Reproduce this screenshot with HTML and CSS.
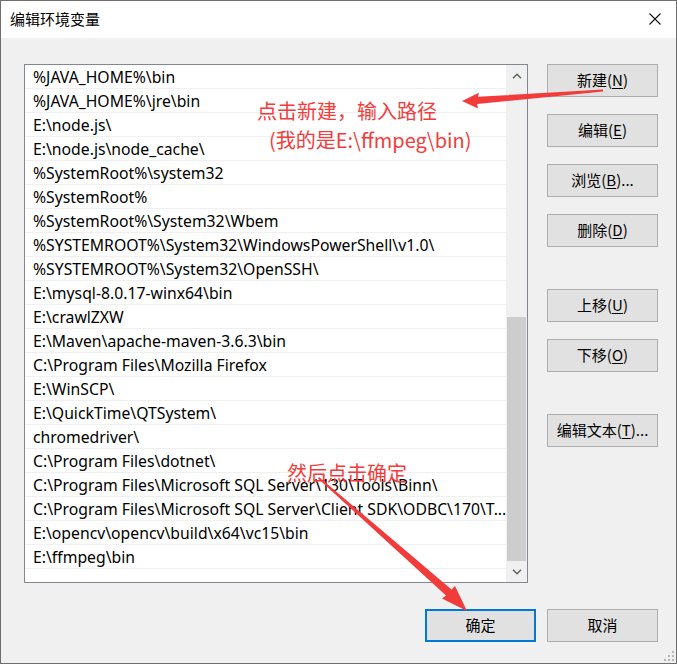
FILE: index.html
```html
<!DOCTYPE html>
<html lang="zh-CN">
<head>
    <meta charset="UTF-8">
    <meta name="viewport" content="width=device-width, initial-scale=1.0">
    <title>编辑环境变量</title>
    <link rel="stylesheet" href="styles.css">
</head>
<body>
    <div class="window">
        <div class="titlebar">
            <span class="title">编辑环境变量</span>
            <svg class="close" width="12" height="12" viewBox="0 0 12 12">
                <path d="M0.5 0.5 L11.5 11.5 M11.5 0.5 L0.5 11.5" stroke="#111" stroke-width="1.1" fill="none"/>
            </svg>
        </div>
        <div class="content">
            <div class="main">
                <div class="listbox">
                    <ul class="items">
                        <li>%JAVA_HOME%\bin</li>
                        <li>%JAVA_HOME%\jre\bin</li>
                        <li>E:\node.js\</li>
                        <li>E:\node.js\node_cache\</li>
                        <li>%SystemRoot%\system32</li>
                        <li>%SystemRoot%</li>
                        <li>%SystemRoot%\System32\Wbem</li>
                        <li>%SYSTEMROOT%\System32\WindowsPowerShell\v1.0\</li>
                        <li>%SYSTEMROOT%\System32\OpenSSH\</li>
                        <li>E:\mysql-8.0.17-winx64\bin</li>
                        <li>E:\crawlZXW</li>
                        <li>E:\Maven\apache-maven-3.6.3\bin</li>
                        <li>C:\Program Files\Mozilla Firefox</li>
                        <li>E:\WinSCP\</li>
                        <li>E:\QuickTime\QTSystem\</li>
                        <li>chromedriver\</li>
                        <li>C:\Program Files\dotnet\</li>
                        <li>C:\Program Files\Microsoft SQL Server\130\Tools\Binn\</li>
                        <li>C:\Program Files\Microsoft SQL Server\Client SDK\ODBC\170\T...</li>
                        <li>E:\opencv\opencv\build\x64\vc15\bin</li>
                        <li>E:\ffmpeg\bin</li>
                        <li></li>
                    </ul>
                    <div class="scrollbar">
                        <div class="sb-btn">
                            <svg width="10" height="6" viewBox="0 0 10 6"><path d="M1 5.2 L5 1.2 L9 5.2" stroke="#606060" stroke-width="1.5" fill="none"/></svg>
                        </div>
                        <div class="sb-track"><div class="sb-thumb"></div></div>
                        <div class="sb-btn">
                            <svg width="10" height="6" viewBox="0 0 10 6"><path d="M1 0.8 L5 4.8 L9 0.8" stroke="#606060" stroke-width="1.5" fill="none"/></svg>
                        </div>
                    </div>
                </div>
                <div class="side">
                    <div class="group">
                        <button class="btn">新建(<u>N</u>)</button>
                        <button class="btn">编辑(<u>E</u>)</button>
                        <button class="btn">浏览(<u>B</u>)...</button>
                        <button class="btn">删除(<u>D</u>)</button>
                    </div>
                    <div class="group">
                        <button class="btn">上移(<u>U</u>)</button>
                        <button class="btn">下移(<u>O</u>)</button>
                    </div>
                    <div class="group">
                        <button class="btn">编辑文本(<u>T</u>)...</button>
                    </div>
                </div>
            </div>
            <div class="footer">
                <button class="btn default">确定</button>
                <button class="btn">取消</button>
            </div>
        </div>
        <div class="grip">
            <i></i><i></i><i></i><i></i><i></i><i></i>
        </div>

        <!-- red notes drawn on top of the screenshot -->
        <svg class="arrows" width="677" height="664" viewBox="0 0 677 664">
            <polygon fill="#f23c3c" points="603,89.5 478,96.8 479,92.8 462,101 478,108.5 477,104 603,91.5"/>
            <polygon fill="#f23c3c" points="319,477 451.5,589.5 455,586 467,611 442,598.5 446,595.5 318,478.5"/>
        </svg>
        <div class="note note-new">点击新建，输入路径</div>
        <div class="note note-path">(我的是E:\ffmpeg\bin)</div>
        <div class="note note-ok">然后点击确定</div>
    </div>
</body>
</html>
```

FILE: styles.css
```css
*{
    box-sizing: border-box;
}
html, body{
    margin: 0;
    padding: 0;
    background: #ffffff;
}
body{
    font-family: "Noto Sans", "Noto Sans CJK SC", sans-serif;
    font-size: 15px;
    color: #000;
}
.window{
    position: relative;
    width: 677px;
    height: 664px;
    border: 1px solid #6e6e6e;
    background-color: #f0f0f0;
    display: flex;
    flex-direction: column;
}
.titlebar{
    height: 37px;
    background: #fff;
    display: flex;
    align-items: center;
    justify-content: space-between;
    padding: 0 15px 2px 9px;
}
.title{
    font-family: "Noto Sans CJK SC", sans-serif;
    font-size: 15px;
    color: #000;
}
.content{
    padding: 26px 18px 0 23px;
}
.main{
    display: flex;
    align-items: flex-start;
}
.listbox{
    width: 504px;
    height: 519px;
    border: 1px solid #828790;
    background: #fff;
    display: flex;
}
.items{
    list-style: none;
    margin: 0;
    padding: 0;
    flex: 1;
    height: 100%;
    overflow: hidden;
}
.items li{
    height: 24px;
    line-height: 24px;
    border-bottom: 1px solid #f0f0f0;
    padding-left: 8px;
    font-size: 15.75px;
    white-space: nowrap;
    overflow: hidden;
}
.scrollbar{
    width: 21px;
    background: #f0f0f0;
    display: flex;
    flex-direction: column;
}
.sb-btn{
    height: 21px;
    display: flex;
    align-items: center;
    justify-content: center;
}
.sb-track{
    flex: 1;
    padding-top: 231px;
}
.sb-thumb{
    height: 244px;
    margin: 0 1px;
    background: #cdcdcd;
}
.side{
    margin-left: 19px;
    display: flex;
    flex-direction: column;
    gap: 42px;
}
.group{
    display: flex;
    flex-direction: column;
    gap: 17px;
}
.btn{
    width: 111px;
    height: 33px;
    padding: 0 0 3px;
    background: #e1e1e1;
    border: 1px solid #adadad;
    font-family: "Noto Sans CJK SC", sans-serif;
    font-size: 15px;
    color: #000;
}
.btn u{
    text-decoration-thickness: 1px;
    text-underline-offset: 2px;
}
.btn.default{
    border: 2px solid #0078d7;
}
.footer{
    margin-top: 26px;
    display: flex;
    justify-content: flex-end;
    gap: 11px;
}
.grip{
    position: absolute;
    right: 2px;
    bottom: 2px;
    width: 10px;
    height: 10px;
    display: grid;
    grid-template-columns: repeat(3, 2px);
    grid-template-rows: repeat(3, 2px);
    gap: 2px;
    direction: rtl;
}
.grip i{
    background: #b8b8b8;
}
.grip i:nth-child(1){ grid-area: 1 / 1; }
.grip i:nth-child(2){ grid-area: 2 / 1; }
.grip i:nth-child(3){ grid-area: 2 / 2; }
.grip i:nth-child(4){ grid-area: 3 / 1; }
.grip i:nth-child(5){ grid-area: 3 / 2; }
.grip i:nth-child(6){ grid-area: 3 / 3; }
.arrows{
    position: absolute;
    left: -1px;
    top: -1px;
    pointer-events: none;
}
.note{
    position: absolute;
    font-family: "Noto Sans CJK SC", sans-serif;
    font-size: 20px;
    line-height: 24px;
    color: #f23c3c;
    white-space: nowrap;
}
.note-new{
    left: 256px;
    top: 98px;
}
.note-path{
    left: 268px;
    top: 127px;
}
.note-ok{
    left: 286px;
    top: 460px;
}
```
